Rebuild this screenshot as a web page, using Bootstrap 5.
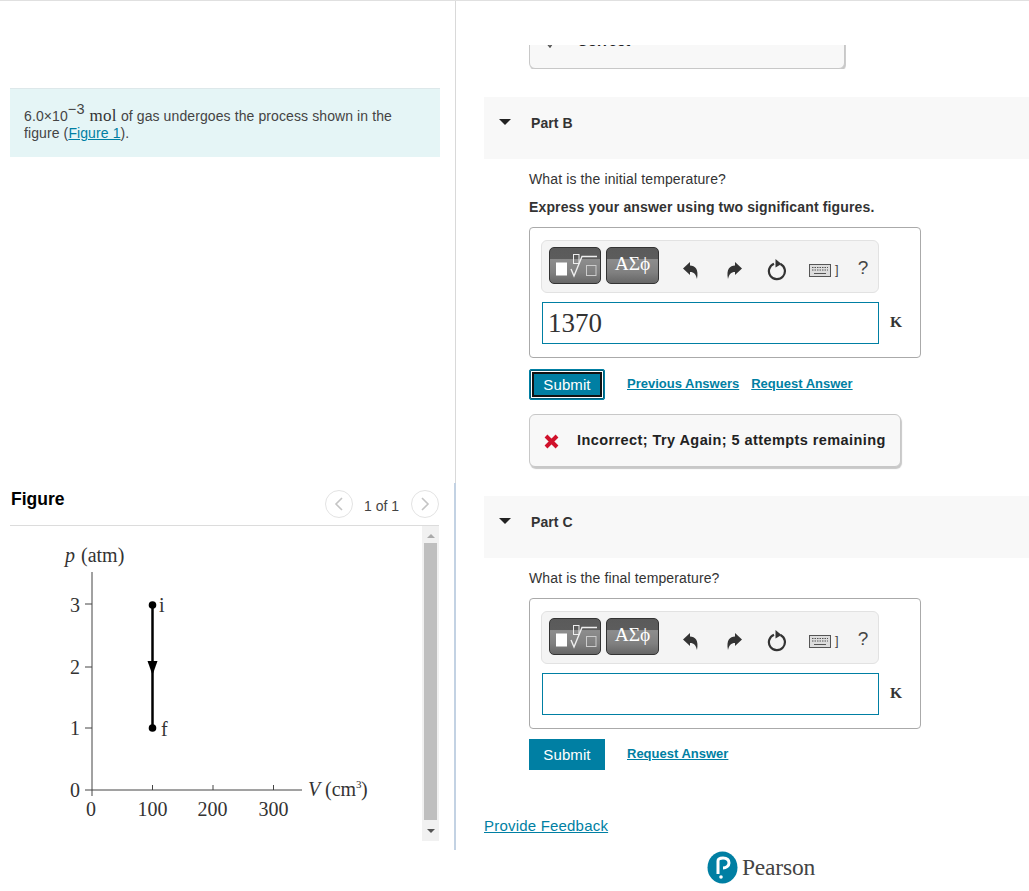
<!DOCTYPE html>
<html lang="en">
<head>
<meta charset="utf-8">
<title>Part B</title>
<link rel="stylesheet" href="https://cdn.jsdelivr.net/npm/bootstrap@5.3.0/dist/css/bootstrap.min.css">
<style>
html,body{height:891px;overflow:hidden;background:#fff}
body{font-family:"Liberation Sans",Arial,sans-serif;font-size:14px;color:#333;line-height:1.2}
.serif{font-family:"Liberation Serif","Times New Roman",serif}
.shell{border-top:1px solid #e0e0e0;height:891px;width:1029px}
.left-pane{width:456px;flex:none}
.prompt-wrap{height:482px;padding:87px 15px 0 10px;border-right:1px solid #d9d9d9}
.prompt{background:#e5f5f6;height:69px;border-top:1px solid #dde8ea;padding:18px 40px 0 14px;line-height:17px;color:#444;letter-spacing:.1px}
.prompt .qty{font-size:17px;color:#333;letter-spacing:.3px}
.prompt sup{font-size:14.500px;top:-.45em;line-height:0;margin-right:1px}
.prompt a,.lnk{color:#007fa3}
.figure-wrap{height:367px;border-right:2px solid #c3d2e3;padding:0 15px 0 10px}
.fig-head{height:43px;border-bottom:1px solid #dcdcdc}
.fig-title{font-size:17.500px;font-weight:700;color:#000;line-height:32px;padding-left:1px}
.fig-pager{margin-top:3px}
.circ{width:28px;height:28px;border-radius:50%;border:1px solid #e3e3e3;color:#c4c4c4}
.pager{font-size:14px;color:#444;margin:8px 12px 0 11px}
.fig-body{height:315px}
.track{width:17px;background:#f1f1f1}
.thumb{width:13px;background:#bfbfbf}
.right-pane{width:573px;padding-left:28px}
.clip{height:24px;margin-top:44px;margin-left:45px;width:317px;overflow:hidden}
.fb-card{background:#f8f8f8;border:1px solid #c8c8c8;border-radius:6px;box-shadow:1px 2px 1px #c8c8c8}
.clip .fb-card{height:40px;width:316px;flex:none}
.clip-text{font-weight:700;font-size:15px;color:#222;padding:3px 0 0 15px;line-height:15px;gap:18px}
.part-head{background:#f8f8f8;height:62px;padding:0 15px;font-weight:700;color:#333;font-size:14px;line-height:52px;gap:20px;letter-spacing:.1px}
.tri{width:0;height:0;border-left:6.500px solid transparent;border-right:6.500px solid transparent;border-top:6px solid #222;margin-top:22px}
.part-body{padding-left:45px;width:437px}
.q{line-height:17px;color:#333;letter-spacing:.125px}
.q-strong{letter-spacing:.14px}
.ans-box{border:1px solid #aaa;border-radius:4px;width:392px;padding:12px 41px 13px 12px;position:relative;height:131px}
.tools{background:#f4f4f4;border:1px solid #e2e2e2;border-radius:6px;height:53px;padding:6px 6px 6px 7px;width:338px;margin-left:-1px}
.tbtn{height:37px;border:1px solid #333;border-radius:5px;background:linear-gradient(#5a5a5a 0,#5c5c5c 30%,#8d8d8d 33%,#808080 70%,#666 100%);color:#fff}
.tbtn1{width:52px;flex:none}
.tbtn2{width:53px;margin-left:5px;font-size:19.500px;line-height:32px;text-align:center;flex:none}
.tool-icons{height:37px;margin-left:24px;color:#444}
.ic-redo{margin-left:27px}
.ic-refresh{margin-left:25px}
.ic-kbd{margin-left:22px}
.kbd-br{font-size:13px;margin:8px 0 0 4px}
.help{font-size:19px;margin:6px 0 0 19px}
.ans-input{display:block;width:337px;height:42px;border:1px solid #007fa3;margin-top:9px;font-size:27px;line-height:40px;color:#333;padding-left:5px}
.unit{position:absolute;right:18px;top:84px;font-weight:700;font-size:15.500px;color:#333;line-height:20px}
.sub-btn{--bs-btn-bg:#007fa3;--bs-btn-border-color:#007fa3;--bs-btn-color:#fff;--bs-btn-hover-bg:#007fa3;--bs-btn-hover-color:#fff;--bs-btn-padding-x:0;--bs-btn-padding-y:0;--bs-btn-font-size:15px;--bs-btn-border-radius:0;width:76px;height:31px;line-height:27px;letter-spacing:.1px}
.sub-focus{box-shadow:inset 0 0 0 1px #005f7a,inset 0 0 0 2px #fff,inset 0 0 0 4px #111;border-radius:2px;line-height:25px}
.lnk{font-weight:700;font-size:13px;text-decoration:underline;position:relative;top:-1px}
.attempt{width:372px;height:53px;padding:1px 0 0 14px;font-weight:700;font-size:14.500px;color:#222;gap:18px;letter-spacing:.42px}
.feedback{font-size:15px;color:#007fa3;text-decoration:underline;margin-top:47px;display:block;line-height:18px;letter-spacing:.2px}
.brand{margin:16px 0 0 223px;gap:4px;font-size:23.500px;color:#444;letter-spacing:-.2px}
</style>
</head>
<body>
<div class="shell d-flex">
  <div class="left-pane">
    <div class="prompt-wrap">
      <div class="prompt">6.0×10<sup>−3</sup> <span class="serif qty">mol</span> of gas undergoes the process shown in the figure (<a href="#">Figure 1</a>).</div>
    </div>
    <div class="figure-wrap">
      <div class="fig-head d-flex justify-content-between align-items-start">
        <div class="fig-title">Figure</div>
        <div class="d-flex align-items-start fig-pager pt-1">
          <div class="circ d-flex align-items-center justify-content-center"><svg width="10" height="14" viewBox="0 0 10 14"><path d="M8 1 2 7l6 6" fill="none" stroke="currentColor" stroke-width="1.600"/></svg></div>
          <div class="pager">1 of 1</div>
          <div class="circ d-flex align-items-center justify-content-center"><svg width="10" height="14" viewBox="0 0 10 14"><path d="M2 1l6 6-6 6" fill="none" stroke="currentColor" stroke-width="1.600"/></svg></div>
        </div>
      </div>
      <div class="fig-body d-flex justify-content-between">
        <svg width="412" height="315" viewBox="10 526 412 315" font-family="Liberation Serif, serif" font-size="20" fill="#333">
          <text x="65" y="562" font-style="italic">p</text><text x="81" y="562">(atm)</text>
          <path d="M92 572V790M85 604h7M85 667h7M85 728h7M85 790H302M92 790v6M152.500 790v-5M213 790v-5M273.500 790v-5" stroke="#444" stroke-width="1" fill="none"/>
          <path d="M152.500 605V728" stroke="#000" stroke-width="2.500"/>
          <circle cx="152.500" cy="605" r="3.800" fill="#000"/><circle cx="152.500" cy="728" r="3.800" fill="#000"/>
          <path d="M147.500 661h10l-5 14z" fill="#000"/>
          <text x="159" y="612">i</text><text x="161" y="736">f</text>
          <text x="70" y="612">3</text><text x="70" y="674">2</text><text x="70" y="735">1</text><text x="70" y="797">0</text>
          <text x="86" y="816">0</text><text x="137.500" y="816">100</text><text x="197.500" y="816">200</text><text x="258.500" y="816">300</text>
          <text x="308" y="796" font-style="italic">V</text><text x="325" y="796">(cm</text><text x="356" y="788" font-size="11">3</text><text x="361" y="796">)</text>
        </svg>
        <div class="track d-flex flex-column align-items-center justify-content-between">
          <svg width="10" height="17" viewBox="0 0 10 17"><path d="M1 12 5 8l4 4z" fill="#aaa"/></svg>
          <div class="thumb flex-grow-1"></div>
          <svg width="10" height="21" viewBox="0 0 10 21"><path d="M1 9l4 4 4-4z" fill="#555"/></svg>
        </div>
      </div>
    </div>
  </div>
  <div class="right-pane">
    <div class="clip d-flex align-items-end">
      <div class="fb-card"><div class="clip-text d-flex"><svg width="14" height="15" viewBox="0 0 14 15"><path d="M1 9l4 5 8-12" fill="none" stroke="#555" stroke-width="1.500"/></svg><span>Correct</span></div></div>
    </div>
    <section style="margin-top:28px">
      <div class="part-head d-flex"><span class="tri"></span><span>Part B</span></div>
      <div class="part-body">
        <p class="q mb-0" style="margin-top:12px">What is the initial temperature?</p>
        <p class="q q-strong fw-bold mb-0" style="margin-top:11px">Express your answer using two significant figures.</p>
        <div class="ans-box" style="margin-top:11px">
          <div class="tools d-flex align-items-start">
            <div class="tbtn tbtn1 d-flex align-items-center justify-content-center">
              <svg width="46" height="30" viewBox="0 0 46 30"><rect x="4" y="11.500" width="11" height="13" fill="#fff"/><path d="M19 18l3 7 8-19.500h15" fill="none" stroke="#eee" stroke-width="1.400"/><rect x="21.500" y="3.500" width="5.500" height="9" fill="none" stroke="#eee"/><rect x="34.500" y="14.500" width="9.500" height="10" fill="none" stroke="#ccc"/></svg>
            </div>
            <div class="tbtn tbtn2 serif">ΑΣϕ</div>
            <div class="tool-icons d-flex align-items-center">
              <svg width="16" height="18" viewBox="0 0 16 18" style="margin-top:10px"><path d="M0 6.500 7 0v3.500c5 0 9 3.500 7 13.500-1-4.500-3-7-7-7v3z" fill="#333"/></svg>
              <svg class="ic-redo" width="16" height="18" viewBox="0 0 16 18" style="margin-top:10px"><path d="M16 6.500 9 0v3.500c-5 0-9 3.500-7 13.500 1-4.500 3-7 7-7v3z" fill="#333"/></svg>
              <svg class="ic-refresh" width="20" height="22" viewBox="0 0 20 22" style="margin-top:8px"><path d="M13.500 5a8 8 0 1 1-6.500-.3" fill="none" stroke="#333" stroke-width="2.200"/><path d="M8.500 0l6 5-6 3.500z" fill="#333"/></svg>
              <svg class="ic-kbd" width="22" height="13" viewBox="0 0 22 13" style="margin-top:10px"><rect x=".5" y=".5" width="21" height="12" fill="#ddd" stroke="#555"/><path d="M3 3.500h16M3 6h16" stroke="#555" stroke-dasharray="1.500 1"/><path d="M5 9.500h12" stroke="#555"/></svg>
              <span class="kbd-br">]</span>
              <span class="help">?</span>
            </div>
          </div>
          <div class="ans-input serif">1370</div>
          <span class="unit serif">K</span>
        </div>
        <div class="d-flex align-items-center" style="margin-top:11px;gap:22px">
          <button type="button" class="btn sub-btn sub-focus">Submit</button>
          <div class="d-flex" style="gap:12px"><a class="lnk" href="#">Previous Answers</a><a class="lnk" href="#">Request Answer</a></div>
        </div>
        <div class="fb-card attempt d-flex align-items-center" style="margin-top:14px">
          <svg width="15" height="15" viewBox="0 0 15 15"><path d="M2 2l11 11M13 2 2 13" stroke="#d0112b" stroke-width="4"/></svg>
          <span>Incorrect; Try Again; 5 attempts remaining</span>
        </div>
      </div>
    </section>
    <section style="margin-top:29px">
      <div class="part-head d-flex"><span class="tri"></span><span>Part C</span></div>
      <div class="part-body">
        <p class="q mb-0" style="margin-top:12px">What is the final temperature?</p>
        <div class="ans-box" style="margin-top:11px">
          <div class="tools d-flex align-items-start">
            <div class="tbtn tbtn1 d-flex align-items-center justify-content-center">
              <svg width="46" height="30" viewBox="0 0 46 30"><rect x="4" y="11.500" width="11" height="13" fill="#fff"/><path d="M19 18l3 7 8-19.500h15" fill="none" stroke="#eee" stroke-width="1.400"/><rect x="21.500" y="3.500" width="5.500" height="9" fill="none" stroke="#eee"/><rect x="34.500" y="14.500" width="9.500" height="10" fill="none" stroke="#ccc"/></svg>
            </div>
            <div class="tbtn tbtn2 serif">ΑΣϕ</div>
            <div class="tool-icons d-flex align-items-center">
              <svg width="16" height="18" viewBox="0 0 16 18" style="margin-top:10px"><path d="M0 6.500 7 0v3.500c5 0 9 3.500 7 13.500-1-4.500-3-7-7-7v3z" fill="#333"/></svg>
              <svg class="ic-redo" width="16" height="18" viewBox="0 0 16 18" style="margin-top:10px"><path d="M16 6.500 9 0v3.500c-5 0-9 3.500-7 13.500 1-4.500 3-7 7-7v3z" fill="#333"/></svg>
              <svg class="ic-refresh" width="20" height="22" viewBox="0 0 20 22" style="margin-top:8px"><path d="M13.500 5a8 8 0 1 1-6.500-.3" fill="none" stroke="#333" stroke-width="2.200"/><path d="M8.500 0l6 5-6 3.500z" fill="#333"/></svg>
              <svg class="ic-kbd" width="22" height="13" viewBox="0 0 22 13" style="margin-top:10px"><rect x=".5" y=".5" width="21" height="12" fill="#ddd" stroke="#555"/><path d="M3 3.500h16M3 6h16" stroke="#555" stroke-dasharray="1.500 1"/><path d="M5 9.500h12" stroke="#555"/></svg>
              <span class="kbd-br">]</span>
              <span class="help">?</span>
            </div>
          </div>
          <div class="ans-input serif"></div>
          <span class="unit serif">K</span>
        </div>
        <div class="d-flex align-items-center" style="margin-top:10px;gap:22px">
          <button type="button" class="btn sub-btn">Submit</button>
          <a class="lnk" href="#">Request Answer</a>
        </div>
      </div>
    </section>
    <a class="feedback" href="#">Provide Feedback</a>
    <div class="brand d-flex align-items-center serif">
      <svg width="31" height="33" viewBox="0 0 31 33"><ellipse cx="15.500" cy="16.500" rx="15" ry="16" fill="#007fa3"/><path d="M11 23V10c0-2 2-3 5-3 4 0 6 2 6 5s-3 5-6 5" fill="none" stroke="#fff" stroke-width="3"/><circle cx="14" cy="26" r="1.800" fill="#fff"/></svg>
      <span>Pearson</span>
    </div>
  </div>
</div>
<script src="https://cdn.jsdelivr.net/npm/bootstrap@5.3.0/dist/js/bootstrap.bundle.min.js"></script>
</body>
</html>
